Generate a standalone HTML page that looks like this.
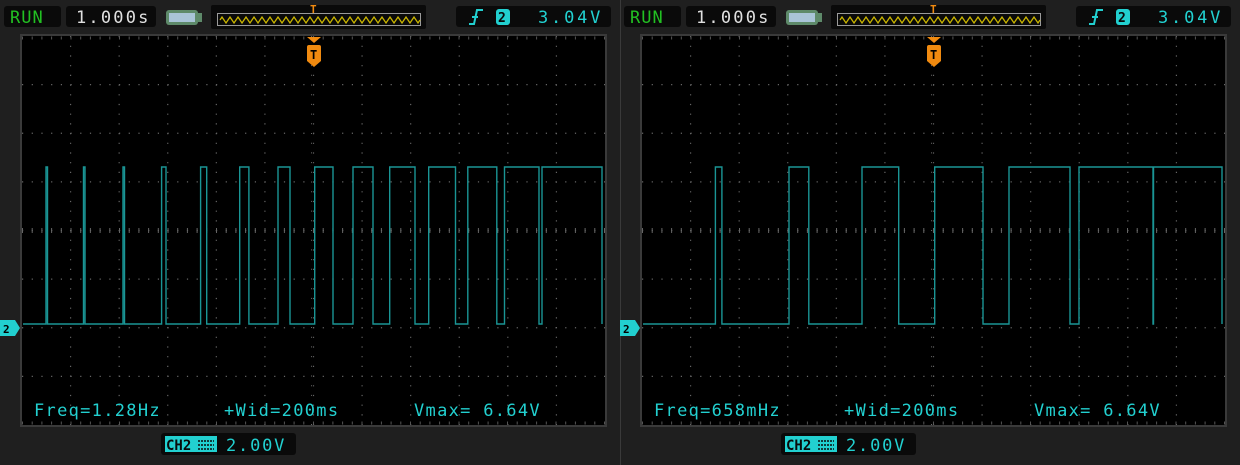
<!DOCTYPE html><html><head><meta charset="utf-8"><style>
html,body{margin:0;padding:0;background:#1f1f1f;width:1240px;height:465px;overflow:hidden}
svg{display:block}
text{font-family:"DejaVu Sans Mono","Liberation Mono",monospace}
</style></head><body>
<svg id="s" width="1240" height="465" xmlns="http://www.w3.org/2000/svg">
<rect width="1240" height="465" fill="#1f1f1f"/>
<line x1="620.5" y1="0" x2="620.5" y2="465" stroke="#3a3a3a"/>
</svg>
<script>
const s=document.getElementById('s');const NS='http://www.w3.org/2000/svg';
function el(t,a,txt){const e=document.createElementNS(NS,t);for(const k in a)e.setAttribute(k,a[k]);if(txt!==undefined)e.textContent=txt;s.appendChild(e);return e;}
const hiY=167,loY=324;
const L=[[46,47.5],[83.5,85],[123,124.5],[161.6,166],[200.6,206.7],[239.7,248.9],[278,290],[314.7,333],[353,373],[389.7,415],[428.7,455.5],[467.8,496.8],[504.5,539],[542,602]];
const R=[[715.4,721.9],[789,808.8],[862,898.7],[934.7,983],[1009,1070],[1079,1153],[1153.5,1222]];
function panel(o,pulses,freq){
 el('rect',{x:o+4,y:6,width:57,height:21,rx:3,fill:'#0a0a0a'});
 el('text',{x:o+10,y:23,fill:'#22c022','font-size':17,'letter-spacing':1},'RUN');
 el('rect',{x:o+66,y:6,width:90,height:21,rx:3,fill:'#0a0a0a'});
 el('text',{x:o+76,y:23,fill:'#e0e0e0','font-size':17,'letter-spacing':2.2},'1.000s');
 el('rect',{x:o+166,y:10,width:32,height:15,rx:3,fill:'#5e8a6a'});
 el('rect',{x:o+198,y:13,width:4,height:9,fill:'#5e8a6a'});
 el('rect',{x:o+169,y:13,width:26,height:9,fill:'#a9c4d8'});
 el('rect',{x:o+211,y:5,width:215,height:24,rx:2,fill:'#0a0a0a'});
 el('rect',{x:o+217.5,y:13.5,width:203,height:12,fill:'none',stroke:'#9a9a9a'});
 let d='M'+(o+220)+' 20';for(let x=o+220;x<o+418;x+=8){d+=' L'+(x+2)+' 17 L'+(x+6)+' 23 L'+(x+8)+' 20';}
 el('path',{d:d,fill:'none',stroke:'#c8b400','stroke-width':1.3});
 el('text',{x:o+310,y:13,fill:'#f08a10','font-size':11,'font-weight':'bold'},'T');
 el('rect',{x:o+456,y:6,width:155,height:21,rx:3,fill:'#0a0a0a'});
 el('path',{d:`M${o+469} 24 L${o+474} 24 L${o+477} 10 L${o+483} 10 M${o+472} 17 L${o+478} 17`,fill:'none',stroke:'#22d0d0','stroke-width':2});
 el('rect',{x:o+496,y:9,width:14,height:16,rx:3,fill:'#22d0d0'});
 el('text',{x:o+498,y:22,fill:'#0a0a0a','font-size':13,'font-weight':'bold'},'2');
 el('text',{x:o+538,y:23,fill:'#22d0d0','font-size':17,'letter-spacing':2.8},'3.04V');
 const gx=o+22,gy=36,gw=583,gh=389;
 el('rect',{x:gx-2,y:gy-2,width:gw+4,height:gh+4,fill:'#3a3a3a'});
 el('rect',{x:gx,y:gy,width:gw,height:gh,fill:'#000'});
 for(let i=1;i<12;i++){const x=gx+i*gw/12;el('line',{x1:x,y1:gy,x2:x,y2:gy+gh,stroke:'#666','stroke-width':1.2,'stroke-dasharray':'1.2 8.5'});}
 for(let j=1;j<8;j++){const y=gy+j*gh/8;el('line',{x1:gx,y1:y,x2:gx+gw,y2:y,stroke:'#666','stroke-width':1.2,'stroke-dasharray':'1.2 8.5'});}
 const cx=gx+gw/2,cy=gy+gh/2;
 el('line',{x1:cx-2,y1:gy,x2:cx-2,y2:gy+gh,stroke:'#666','stroke-width':1,'stroke-dasharray':'1 8.7'});
 el('line',{x1:gx,y1:cy,x2:gx+gw,y2:cy,stroke:'#666','stroke-width':5,'stroke-dasharray':'1 8.7'});
 el('line',{x1:gx,y1:gy+2,x2:gx+gw,y2:gy+2,stroke:'#555','stroke-width':3,'stroke-dasharray':'1 8.7'});
 el('line',{x1:gx,y1:gy+gh-2,x2:gx+gw,y2:gy+gh-2,stroke:'#555','stroke-width':3,'stroke-dasharray':'1 8.7'});
 let p='M'+(gx+1)+' '+loY;
 for(const [a,b] of pulses){p+=` L${a} ${loY} L${a} ${hiY} L${b} ${hiY} L${b} ${loY}`;}
 const last=pulses[pulses.length-1];
 if(last[1]<gx+gw-5)p+=` L${gx+gw-2} ${loY}`;
 el('path',{d:p,fill:'none',stroke:'#1a9595','stroke-width':1.4});
 el('path',{d:`M${o+307} 37 L${o+321} 37 L${o+314} 43 Z`,fill:'#f08a10'});
 el('path',{d:`M${o+307} 47 Q${o+307} 45 ${o+309} 45 L${o+319} 45 Q${o+321} 45 ${o+321} 47 L${o+321} 61 L${o+314} 67 L${o+307} 61 Z`,fill:'#f08a10'});
 el('text',{x:o+310,y:59,fill:'#000','font-size':12,'font-weight':'bold'},'T');
 el('path',{d:`M${o} 320 L${o+15} 320 L${o+20} 328 L${o+15} 336 L${o} 336 Z`,fill:'#22d0d0'});
 el('text',{x:o+3,y:333,fill:'#000','font-size':11,'font-weight':'bold'},'2');
 el('text',{x:o+34,y:416,fill:'#22d0d0','font-size':17,'letter-spacing':1.3},freq);
 el('text',{x:o+224,y:416,fill:'#22d0d0','font-size':17,'letter-spacing':1.3},'+Wid=200ms');
 el('text',{x:o+414,y:416,fill:'#22d0d0','font-size':17,'letter-spacing':1.3},'Vmax= 6.64V');
 el('rect',{x:o+161,y:433,width:135,height:22,rx:3,fill:'#0a0a0a'});
 el('rect',{x:o+165,y:436,width:52,height:16,fill:'#22d0d0'});
 el('text',{x:o+166,y:450,fill:'#0a0a0a','font-size':14,'font-weight':'bold'},'CH2');
 el('path',{d:`M${o+198} 441 h16 M${o+198} 445 h16 M${o+198} 449 h16`,stroke:'#0a0a0a','stroke-width':1.5,'stroke-dasharray':'2 1'});
 el('text',{x:o+226,y:451,fill:'#22d0d0','font-size':17,'letter-spacing':1.8},'2.00V');
}
panel(0,L,'Freq=1.28Hz');
panel(620,R,'Freq=658mHz');
</script>
</body></html>
